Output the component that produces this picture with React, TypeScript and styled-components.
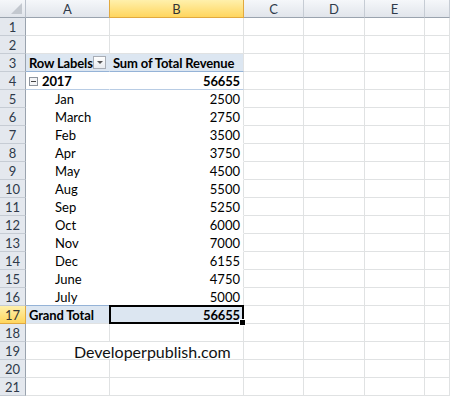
import React from "react";
import styled, { createGlobalStyle, css } from "styled-components";

const GlobalStyle = createGlobalStyle`
  html, body {
    margin: 0;
    padding: 0;
    background: #fff;
  }
  body {
    font-family: "Lato", "Open Sans", sans-serif;
    color: #000;
  }
`;

const COLS = ["A", "B", "C", "D", "E", ""];
const ROW_COUNT = 21;

const months: [string, number][] = [
  ["Jan", 2500],
  ["March", 2750],
  ["Feb", 3500],
  ["Apr", 3750],
  ["May", 4500],
  ["Aug", 5500],
  ["Sep", 5250],
  ["Oct", 6000],
  ["Nov", 7000],
  ["Dec", 6155],
  ["June", 4750],
  ["July", 5000],
];

const Sheet = styled.div`
  display: grid;
  grid-template-columns: 26px 84px 134px 60px 61px 60px 1fr;
  grid-template-rows: 18px;
  grid-auto-rows: 18px;
  width: 450px;
  height: 397px;
  overflow: hidden;
  font-size: 13px;
`;

const headBg = css`
  background: linear-gradient(#f5f7fa, #e1e5eb);
  color: #2f3a4a;
`;

const selectedHead = css`
  background: linear-gradient(#fff0ac, #ffd65e);
  border-color: #e1a93f;
  color: #333;
`;

const Corner = styled.div`
  ${headBg};
  position: relative;
  border-right: 1px solid #b9c0ca;
  border-bottom: 1px solid #9aa3ae;
  box-sizing: border-box;

  &::after {
    content: "";
    position: absolute;
    right: 3px;
    bottom: 3px;
    width: 0;
    height: 0;
    border-left: 11px solid transparent;
    border-bottom: 11px solid #c3c8cf;
  }
`;

const ColHead = styled.div<{ $selected?: boolean }>`
  ${headBg};
  display: flex;
  align-items: center;
  justify-content: center;
  box-sizing: border-box;
  border-right: 1px solid #c6ccd4;
  border-bottom: 1px solid #9aa3ae;
  font-size: 13px;
  ${(p) => p.$selected && selectedHead};
  ${(p) => p.$selected && "border-left: 1px solid #e1a93f; margin-left: -1px;"}
`;

const RowHead = styled.div<{ $selected?: boolean }>`
  background: #e4e8ee;
  color: #2f3a4a;
  display: flex;
  align-items: center;
  justify-content: center;
  box-sizing: border-box;
  border-right: 1px solid #9aa3ae;
  border-bottom: 1px solid #c6ccd4;
  font-size: 13px;
  ${(p) => p.$selected && selectedHead};
`;

const Cell = styled.div<{ $span?: number }>`
  box-sizing: border-box;
  border-right: 1px solid #e0e2e3;
  border-bottom: 1px solid #e0e2e3;
  display: flex;
  align-items: center;
  white-space: nowrap;
  ${(p) => p.$span && `grid-column: span ${p.$span};`}
`;

type Tone = "plain" | "head" | "total";

const PivotCell = styled.div<{
  $tone?: Tone;
  $right?: boolean;
  $bold?: boolean;
  $indent?: number;
  $line?: "blue" | "light";
  $edge?: boolean;
}>`
  position: relative;
  box-sizing: border-box;
  display: flex;
  align-items: center;
  white-space: nowrap;
  padding: 1px 3px 0 ${(p) => 3 + (p.$indent ?? 0)}px;
  justify-content: ${(p) => (p.$right ? "flex-end" : "flex-start")};
  font-weight: ${(p) => (p.$bold ? 700 : 400)};
  letter-spacing: ${(p) => (p.$bold ? "-0.15px" : "0")};
  background: ${(p) =>
    p.$tone === "head" || p.$tone === "total" ? "#dce6f1" : "#fff"};
  border-right: 1px solid ${(p) => (p.$edge ? "#e0e2e3" : "transparent")};
  border-bottom: 1px solid
    ${(p) =>
      p.$line === "blue"
        ? "#95b3d7"
        : p.$line === "light"
        ? "#b8cce4"
        : p.$tone === "total"
        ? "#e0e2e3"
        : "transparent"};
  ${(p) => p.$tone === "total" && "margin-top: -1px; border-top: 1px solid #95b3d7; height: 19px;"}
`;

const Selected = styled.div`
  position: absolute;
  left: -1px;
  top: -1px;
  right: -1px;
  bottom: -1px;
  border: 2px solid #000;
  pointer-events: none;

  &::after {
    content: "";
    position: absolute;
    right: -4px;
    bottom: -4px;
    width: 5px;
    height: 5px;
    background: #000;
    border: 1px solid #fff;
  }
`;

const FilterButton = styled.span`
  position: absolute;
  right: 3px;
  top: 2px;
  width: 13px;
  height: 13px;
  box-sizing: border-box;
  border: 1px solid #a8adb5;
  background: linear-gradient(#ffffff, #e8ebef);
  display: flex;
  align-items: center;
  justify-content: center;

  &::before {
    content: "";
    width: 0;
    height: 0;
    border-left: 3px solid transparent;
    border-right: 3px solid transparent;
    border-top: 3px solid #555;
  }
`;

const CollapseBox = styled.span`
  width: 9px;
  height: 9px;
  box-sizing: border-box;
  border: 1px solid #8c939c;
  background: #f4f5f7;
  margin-right: 4px;
  display: inline-flex;
  align-items: center;
  justify-content: center;

  &::before {
    content: "";
    width: 5px;
    height: 1px;
    background: #444;
  }
`;

const Watermark = styled.span`
  font-size: 16px;
  padding-left: 48px;
  padding-top: 2px;
  color: #111;
`;

const rowContent = (r: number): React.ReactNode => {
  if (r === 3) {
    return (
      <>
        <PivotCell $tone="head" $bold $line="blue">
          Row Labels
          <FilterButton />
        </PivotCell>
        <PivotCell $tone="head" $bold $line="blue" $edge>
          Sum of Total Revenue
        </PivotCell>
      </>
    );
  }
  if (r === 4) {
    return (
      <>
        <PivotCell $bold $line="light">
          <CollapseBox />
          2017
        </PivotCell>
        <PivotCell $bold $right $line="light" $edge>
          56655
        </PivotCell>
      </>
    );
  }
  if (r >= 5 && r <= 16) {
    const [label, value] = months[r - 5];
    return (
      <>
        <PivotCell $indent={26}>{label}</PivotCell>
        <PivotCell $right $edge>
          {value}
        </PivotCell>
      </>
    );
  }
  if (r === 17) {
    return (
      <>
        <PivotCell $tone="total" $bold>
          Grand Total
        </PivotCell>
        <PivotCell $tone="total" $bold $right $edge>
          56655
          <Selected />
        </PivotCell>
      </>
    );
  }
  if (r === 19) {
    return (
      <Cell $span={2}>
        <Watermark>Developerpublish.com</Watermark>
      </Cell>
    );
  }
  return (
    <>
      <Cell />
      <Cell />
    </>
  );
};

export default function App() {
  const rows = Array.from({ length: ROW_COUNT }, (_, i) => i + 1);
  return (
    <>
      <GlobalStyle />
      <Sheet>
        <Corner />
        {COLS.map((c, i) => (
          <ColHead key={i} $selected={c === "B"}>
            {c}
          </ColHead>
        ))}
        {rows.map((r) => (
          <React.Fragment key={r}>
            <RowHead $selected={r === 17}>{r}</RowHead>
            {rowContent(r)}
            {COLS.slice(2).map((_, i) => (
              <Cell key={i} />
            ))}
          </React.Fragment>
        ))}
      </Sheet>
    </>
  );
}
